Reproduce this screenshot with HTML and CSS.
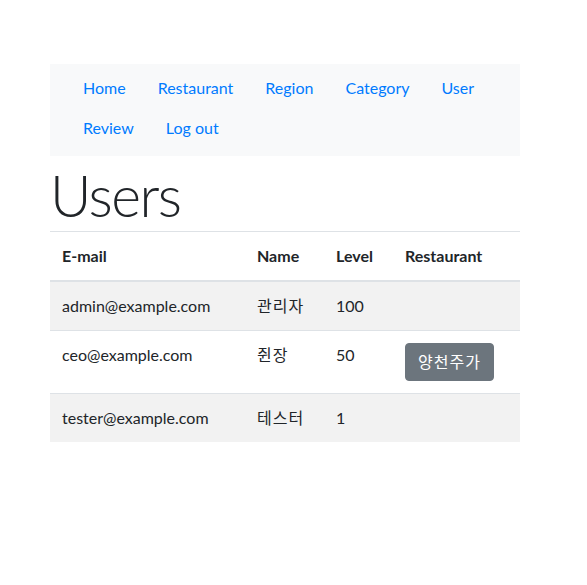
FILE: index.html
```html
<!DOCTYPE html>
<html lang="ko">
<head>
    <meta charset="UTF-8">
    <meta name="viewport" content="width=device-width, initial-scale=1.0">
    <title>Users</title>
    <link rel="stylesheet" href="styles.css">
</head>
<body>
    <div class="container">
        <nav class="navbar">
            <a class="nav-link" href="#">Home</a>
            <a class="nav-link" href="#">Restaurant</a>
            <a class="nav-link" href="#">Region</a>
            <a class="nav-link" href="#">Category</a>
            <a class="nav-link" href="#">User</a>
            <a class="nav-link" href="#">Review</a>
            <a class="nav-link" href="#">Log out</a>
        </nav>

        <h1 class="title">Users</h1>

        <table class="table">
            <thead>
                <tr>
                    <th class="col-email">E-mail</th>
                    <th class="col-name">Name</th>
                    <th class="col-level">Level</th>
                    <th class="col-rest">Restaurant</th>
                </tr>
            </thead>
            <tbody>
                <tr class="striped">
                    <td>admin@example.com</td>
                    <td class="ko">관리자</td>
                    <td>100</td>
                    <td></td>
                </tr>
                <tr>
                    <td>ceo@example.com</td>
                    <td class="ko">쥔장</td>
                    <td>50</td>
                    <td><button class="btn">양천주가</button></td>
                </tr>
                <tr class="striped">
                    <td>tester@example.com</td>
                    <td class="ko">테스터</td>
                    <td>1</td>
                    <td></td>
                </tr>
            </tbody>
        </table>
    </div>
</body>
</html>
```

FILE: styles.css
```css
* {
    margin: 0;
    padding: 0;
    box-sizing: border-box;
}

body {
    font-family: 'Lato', 'Noto Sans CJK KR', sans-serif;
    font-size: 16px;
    line-height: 24px;
    color: #212529;
    background-color: #fff;
}

.container {
    width: 470px;
    margin: 64px 0 0 50px;
}

.navbar {
    background-color: #f8f9fa;
    display: flex;
    flex-wrap: wrap;
    padding: 4px 17px 8px;
}

.nav-link {
    color: #007bff;
    text-decoration: none;
    padding: 8px 16px;
}

.title {
    font-family: 'Lato', sans-serif;
    font-weight: 300;
    font-size: 57px;
    line-height: 75px;
    letter-spacing: -1.5px;
    padding-top: 2px;
    height: 75px;
    color: #212529;
}

.table {
    width: 100%;
    border-collapse: collapse;
    border-top: 1px solid #dee2e6;
}

.table th,
.table td {
    text-align: left;
    vertical-align: top;
    padding: 12px;
}

.table th {
    font-weight: bold;
    border-bottom: 2px solid #dee2e6;
}

.table td {
    border-top: 1px solid #dee2e6;
}

.table td.ko {
    letter-spacing: 1px;
}

.col-email { width: 195px; }
.col-name { width: 79px; }
.col-level { width: 69px; }

.striped {
    background-color: #f2f2f2;
}

.btn {
    font-family: inherit;
    font-size: 16px;
    line-height: 24px;
    letter-spacing: 1px;
    color: #fff;
    background-color: #6c757d;
    border: 1px solid #6c757d;
    border-radius: 4px;
    padding: 6px 12px;
}
```
